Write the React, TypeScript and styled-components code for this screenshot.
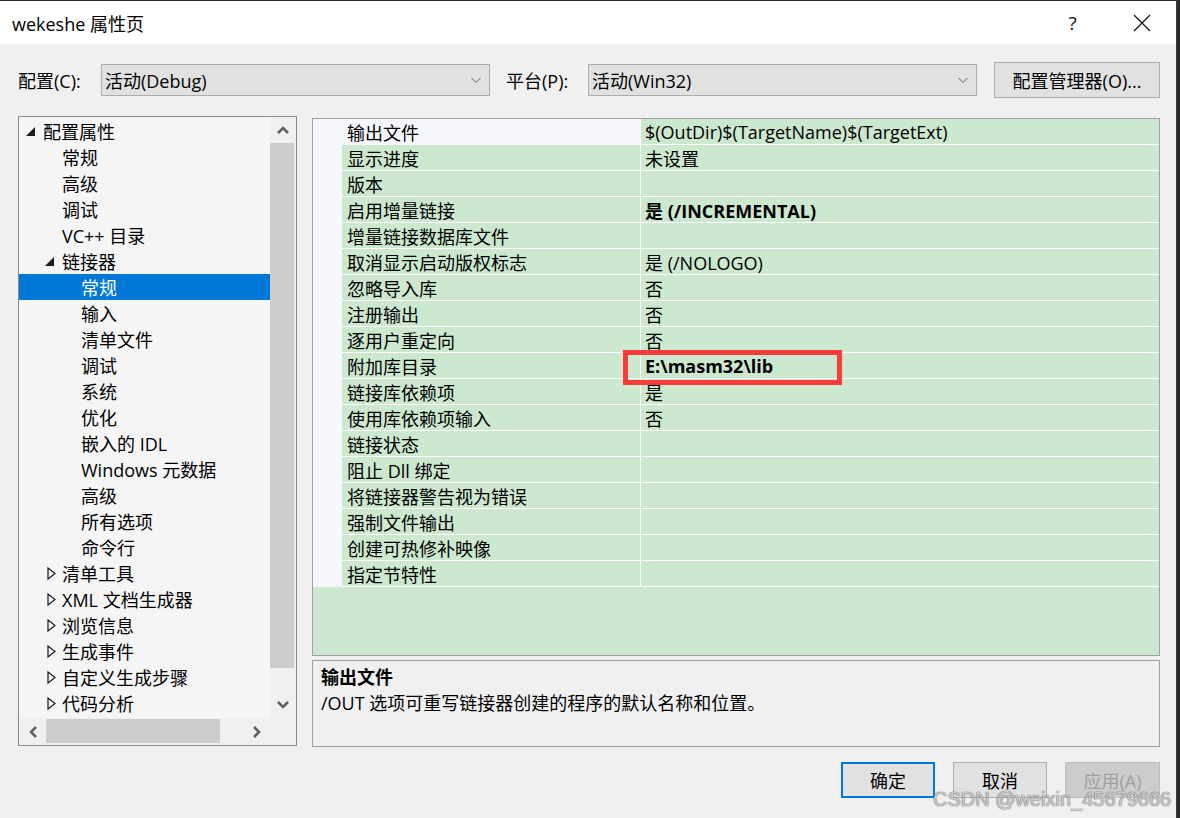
import React from 'react';
import styled, { createGlobalStyle } from 'styled-components';

const GlobalStyle = createGlobalStyle`
  html, body {
    margin: 0;
    padding: 0;
    background: #2b2b2b;
  }
  * {
    box-sizing: border-box;
  }
`;

const FONT = `"Open Sans", "Noto Sans CJK SC", sans-serif`;

const Page = styled.div`
  width: 1180px;
  height: 818px;
  overflow: hidden;
  padding-top: 1px;
`;
const Dialog = styled.div`
  position: relative;
  width: 1177px;
  height: 817px;
  background: #f0f0f0;
  border-right: 1px solid #3a3a3a;
  font-family: ${FONT};
  font-size: 18px;
  color: #000;
  display: flex;
  flex-direction: column;
`;
const TitleBar = styled.div`
  height: 43px;
  background: #fff;
  display: flex;
  align-items: center;
`;
const Title = styled.div`
  flex: 1;
  padding-left: 12px;
  font-size: 18px;
`;
const TitleButton = styled.div`
  width: 69px;
  height: 43px;
  display: flex;
  align-items: center;
  justify-content: center;
  font-size: 19px;
  color: #111;
`;
const Body = styled.div`
  flex: 1;
  padding: 18px 16px 0 18px;
  display: flex;
  flex-direction: column;
`;
const ConfigRow = styled.div`
  height: 36px;
  display: flex;
  align-items: center;
`;
const Label = styled.div<{ $w: number; $ml?: number }>`
  width: ${({ $w }) => $w}px;
  margin-left: ${({ $ml }) => $ml || 0}px;
  white-space: nowrap;
`;
const Combo = styled.div`
  width: 389px;
  height: 32px;
  background: #e1e1e1;
  border: 1px solid #adadad;
  display: flex;
  align-items: center;
  padding: 0 8px 0 3px;
  justify-content: space-between;
`;
const PushButton = styled.div<{ $w: number; $default?: boolean; $disabled?: boolean }>`
  width: ${({ $w }) => $w}px;
  height: 36px;
  display: flex;
  align-items: center;
  justify-content: center;
  background: ${({ $disabled }) => ($disabled ? '#cccccc' : '#e1e1e1')};
  border: ${({ $default, $disabled }) =>
    $default ? '2px solid #0078d7' : $disabled ? '1px solid #bfbfbf' : '1px solid #adadad'};
  color: ${({ $disabled }) => ($disabled ? '#a0a0a0' : '#000')};
  white-space: nowrap;
`;
const ManagerButton = styled(PushButton)`
  margin-left: 17px;
`;
const Main = styled.div`
  margin-top: 18px;
  height: 631px;
  display: flex;
  gap: 15px;
`;
const TreeBox = styled.div`
  width: 279px;
  height: 630px;
  border: 1px solid #8c8c8c;
  display: grid;
  grid-template-columns: 1fr 26px;
  grid-template-rows: 1fr 27px;
  background: #f0f0f0;
`;
const TreeContent = styled.div`
  background: #f5f5f5;
  padding-top: 1px;
  overflow: hidden;
`;
const TreeRow = styled.div<{ $level: number; $selected?: boolean }>`
  height: 26px;
  display: flex;
  align-items: center;
  padding-left: ${({ $level }) => 4 + $level * 19}px;
  background: ${({ $selected }) => ($selected ? '#0078d7' : 'transparent')};
  color: ${({ $selected }) => ($selected ? '#fff' : '#000')};
  white-space: nowrap;
`;
const Expander = styled.div`
  width: 20px;
  height: 26px;
  display: flex;
  align-items: center;
  padding-left: 3px;
`;
const VScroll = styled.div`
  display: flex;
  flex-direction: column;
`;
const ScrollArrow = styled.div<{ $w?: number }>`
  width: ${({ $w }) => ($w ? `${$w}px` : '100%')};
  height: 26px;
  flex-shrink: 0;
  display: flex;
  align-items: center;
  justify-content: center;
`;
const VTrack = styled.div`
  flex: 1;
  padding: 0 2px 24px 0;
`;
const VThumb = styled.div`
  height: 100%;
  background: #cdcdcd;
`;
const HScroll = styled.div`
  display: flex;
  align-items: center;
`;
const HTrack = styled.div`
  flex: 1;
  height: 100%;
  padding: 1px 23px 2px 0;
  display: flex;
`;
const HThumb = styled.div`
  width: 174px;
  background: #cdcdcd;
`;
const Corner = styled.div`
  background: #f0f0f0;
`;
const RightCol = styled.div`
  width: 848px;
  margin-top: 2px;
  display: flex;
  flex-direction: column;
  gap: 4px;
`;
const GridBox = styled.div`
  height: 538px;
  border: 1px solid #a0a0a0;
  background: #cce8cf;
`;
const GridRow = styled.div`
  height: 26px;
  display: grid;
  grid-template-columns: 29px 299px 1fr;
  border-bottom: 1px solid #fff;
`;
const MarginCell = styled.div`
  background: #f5f7fc;
`;
const NameCell = styled.div<{ $active?: boolean }>`
  background: ${({ $active }) => ($active ? '#f5f7fc' : 'transparent')};
  border-right: 1px solid #fff;
  padding-left: 5px;
  display: flex;
  align-items: center;
  white-space: nowrap;
`;
const ValueCell = styled.div<{ $bold?: boolean }>`
  position: relative;
  padding-left: 4px;
  display: flex;
  align-items: center;
  font-weight: ${({ $bold }) => ($bold ? 700 : 400)};
  white-space: nowrap;
`;
const RedBox = styled.div`
  position: absolute;
  left: -18px;
  top: -3px;
  width: 219px;
  height: 35px;
  border: 5px solid #fb3a3a;
`;
const DescBox = styled.div`
  height: 87px;
  border: 1px solid #a0a0a0;
  padding: 3px 8px;
`;
const DescTitle = styled.div`
  font-weight: 700;
  line-height: 26px;
`;
const DescText = styled.div`
  line-height: 26px;
`;
const ButtonRow = styled.div`
  margin-top: 15px;
  display: flex;
  justify-content: flex-end;
  gap: 18px;
`;
const Watermark = styled.div`
  position: absolute;
  left: 933px;
  top: 787px;
  font-family: "Liberation Sans", Arial, sans-serif;
  font-size: 20px;
  color: rgba(245, 245, 245, 0.75);
  text-shadow: 0 0 1px rgba(60, 60, 60, 0.9), 0 0 1px rgba(60, 60, 60, 0.6);
  white-space: nowrap;
`;

const ChevronDown = ({ size = 10, stroke = 1, color = '#606060' }) => (
  <svg width={size} height={size / 2 + 2} viewBox="0 0 10 7">
    <polyline points="0.5,1 5,5.5 9.5,1" fill="none" stroke={color} strokeWidth={stroke} />
  </svg>
);

const ScrollChevron = ({ dir }: { dir: 'up' | 'down' | 'left' | 'right' }) => {
  const rot = { up: 0, down: 180, left: 270, right: 90 }[dir];
  return (
    <svg width="12" height="12" viewBox="0 0 12 12" style={{ transform: `rotate(${rot}deg)` }}>
      <polyline points="1,9 6,4 11,9" fill="none" stroke="#606060" strokeWidth="2.6" />
    </svg>
  );
};

const ExpandedIcon = () => (
  <svg width="9" height="9" viewBox="0 0 9 9">
    <polygon points="9,0 9,9 0,9" fill="#1a1a1a" />
  </svg>
);

const CollapsedIcon = () => (
  <svg width="10" height="13" viewBox="0 0 10 13" style={{ marginLeft: 2 }}>
    <polygon points="1,1 8,6.5 1,12" fill="none" stroke="#1a1a1a" strokeWidth="1.2" />
  </svg>
);

type TreeItem = { label: string; level: number; state?: 'open' | 'closed'; selected?: boolean };

const TREE: TreeItem[] = [
  { label: '配置属性', level: 0, state: 'open' },
  { label: '常规', level: 1 },
  { label: '高级', level: 1 },
  { label: '调试', level: 1 },
  { label: 'VC++ 目录', level: 1 },
  { label: '链接器', level: 1, state: 'open' },
  { label: '常规', level: 2, selected: true },
  { label: '输入', level: 2 },
  { label: '清单文件', level: 2 },
  { label: '调试', level: 2 },
  { label: '系统', level: 2 },
  { label: '优化', level: 2 },
  { label: '嵌入的 IDL', level: 2 },
  { label: 'Windows 元数据', level: 2 },
  { label: '高级', level: 2 },
  { label: '所有选项', level: 2 },
  { label: '命令行', level: 2 },
  { label: '清单工具', level: 1, state: 'closed' },
  { label: 'XML 文档生成器', level: 1, state: 'closed' },
  { label: '浏览信息', level: 1, state: 'closed' },
  { label: '生成事件', level: 1, state: 'closed' },
  { label: '自定义生成步骤', level: 1, state: 'closed' },
  { label: '代码分析', level: 1, state: 'closed' },
];

type Prop = { name: string; value: string; bold?: boolean; marked?: boolean };

const PROPS: Prop[] = [
  { name: '输出文件', value: '$(OutDir)$(TargetName)$(TargetExt)' },
  { name: '显示进度', value: '未设置' },
  { name: '版本', value: '' },
  { name: '启用增量链接', value: '是 (/INCREMENTAL)', bold: true },
  { name: '增量链接数据库文件', value: '' },
  { name: '取消显示启动版权标志', value: '是 (/NOLOGO)' },
  { name: '忽略导入库', value: '否' },
  { name: '注册输出', value: '否' },
  { name: '逐用户重定向', value: '否' },
  { name: '附加库目录', value: 'E:\\masm32\\lib', bold: true, marked: true },
  { name: '链接库依赖项', value: '是' },
  { name: '使用库依赖项输入', value: '否' },
  { name: '链接状态', value: '' },
  { name: '阻止 Dll 绑定', value: '' },
  { name: '将链接器警告视为错误', value: '' },
  { name: '强制文件输出', value: '' },
  { name: '创建可热修补映像', value: '' },
  { name: '指定节特性', value: '' },
];

export default function App() {
  return (
    <Page>
      <GlobalStyle />
      <Dialog>
        <TitleBar>
          <Title>wekeshe 属性页</Title>
          <TitleButton>?</TitleButton>
          <TitleButton>
            <svg width="18" height="18" viewBox="0 0 18 18">
              <path d="M1 1 L17 17 M17 1 L1 17" stroke="#111" strokeWidth="1.2" />
            </svg>
          </TitleButton>
        </TitleBar>
        <Body>
          <ConfigRow>
            <Label $w={83}>配置(C):</Label>
            <Combo>
              <span>活动(Debug)</span>
              <ChevronDown />
            </Combo>
            <Label $w={82} $ml={16}>平台(P):</Label>
            <Combo>
              <span>活动(Win32)</span>
              <ChevronDown />
            </Combo>
            <ManagerButton $w={166}>配置管理器(O)...</ManagerButton>
          </ConfigRow>
          <Main>
            <TreeBox>
              <TreeContent>
                {TREE.map((item, i) => (
                  <TreeRow key={i} $level={item.level} $selected={item.selected}>
                    <Expander>
                      {item.state === 'open' && <ExpandedIcon />}
                      {item.state === 'closed' && <CollapsedIcon />}
                    </Expander>
                    {item.label}
                  </TreeRow>
                ))}
              </TreeContent>
              <VScroll>
                <ScrollArrow>
                  <ScrollChevron dir="up" />
                </ScrollArrow>
                <VTrack>
                  <VThumb />
                </VTrack>
                <ScrollArrow>
                  <ScrollChevron dir="down" />
                </ScrollArrow>
              </VScroll>
              <HScroll>
                <ScrollArrow $w={27}>
                  <ScrollChevron dir="left" />
                </ScrollArrow>
                <HTrack>
                  <HThumb />
                </HTrack>
                <ScrollArrow $w={26}>
                  <ScrollChevron dir="right" />
                </ScrollArrow>
              </HScroll>
              <Corner />
            </TreeBox>
            <RightCol>
              <GridBox>
                {PROPS.map((p, i) => (
                  <GridRow key={i}>
                    <MarginCell />
                    <NameCell $active={i === 0}>{p.name}</NameCell>
                    <ValueCell $bold={p.bold}>
                      {p.value}
                      {p.marked && <RedBox />}
                    </ValueCell>
                  </GridRow>
                ))}
              </GridBox>
              <DescBox>
                <DescTitle>输出文件</DescTitle>
                <DescText>/OUT 选项可重写链接器创建的程序的默认名称和位置。</DescText>
              </DescBox>
            </RightCol>
          </Main>
          <ButtonRow>
            <PushButton $w={94} $default>确定</PushButton>
            <PushButton $w={94}>取消</PushButton>
            <PushButton $w={95} $disabled>应用(A)</PushButton>
          </ButtonRow>
        </Body>
        <Watermark>CSDN @weixin_45679666</Watermark>
      </Dialog>
    </Page>
  );
}
